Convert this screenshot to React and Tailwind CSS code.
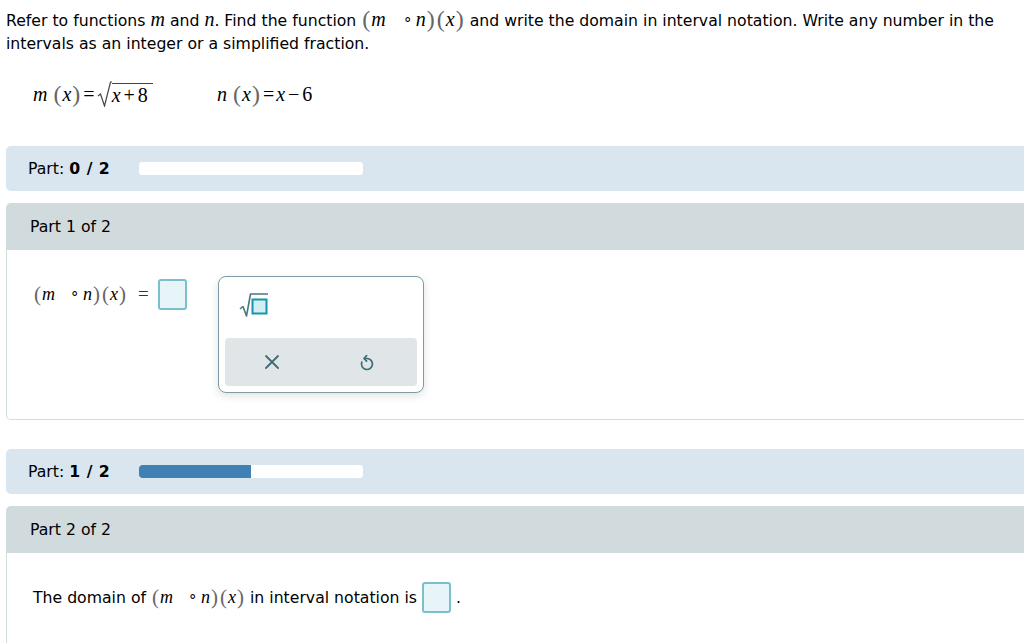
import React from 'react';

const serif = { fontFamily: '"Liberation Serif", "Times New Roman", serif' };

function Paren({ children, big }) {
  return (
    <span className={`text-[#666] leading-none align-[-1px] mx-[1px] ${big ? 'text-[24px]' : 'text-[21px]'}`}>{children}</span>
  );
}

function Compose({ big }) {
  return (
    <span style={serif} className={`whitespace-nowrap ${big ? 'text-[20px]' : 'text-[18px]'}`}>
      <Paren big={big}>(</Paren>
      <i>m</i>
      <span className={`mr-[4px] text-[15px] align-[2px] ${big ? 'ml-[17px]' : 'ml-[15px]'}`}>∘</span>
      <i>n</i>
      <Paren big={big}>)</Paren>
      <Paren big={big}>(</Paren>
      <i>x</i>
      <Paren big={big}>)</Paren>
    </span>
  );
}

function AnswerBox() {
  return <span className="inline-block w-[29px] h-[31px] rounded-[3px] border-2 border-[#7bbfcc] bg-[#e7f4f8] align-middle" />;
}

function SqrtIcon() {
  return (
    <svg width="30" height="28" viewBox="0 0 30 28">
      <path d="M1 18 L4 15.5 L7.5 25 L11.5 3 H29" fill="none" stroke="#4b7782" strokeWidth="1.6" strokeLinejoin="round" />
      <rect x="13.5" y="8.5" width="14" height="14" fill="#d3eef3" stroke="#1596ae" strokeWidth="2" />
    </svg>
  );
}

function XIcon() {
  return (
    <svg width="16" height="16" viewBox="0 0 16 16">
      <path d="M2 2 L14 14 M14 2 L2 14" stroke="#3e6c78" strokeWidth="1.8" strokeLinecap="round" />
    </svg>
  );
}

function UndoIcon() {
  return (
    <svg width="18" height="18" viewBox="0 0 18 18">
      <path d="M3.8 9.1 A5.5 5.5 0 1 0 9 5.5 H6.5" fill="none" stroke="#3e6c78" strokeWidth="1.7" strokeLinecap="round" />
      <path d="M8.6 2.6 L6 5.5 L8.6 8.2" fill="none" stroke="#3e6c78" strokeWidth="1.7" strokeLinecap="round" strokeLinejoin="round" />
    </svg>
  );
}

function PartBar({ done }) {
  return (
    <div className="ml-[6px] w-[1030px] h-[45px] rounded-l-[5px] bg-[#d9e6ef] flex items-center pl-[22px]">
      <span className="w-[111px] whitespace-nowrap">
        Part: <b className="tracking-[0.5px]">{done} / 2</b>
      </span>
      <div className="w-[224px] h-[13px] rounded-[3px] bg-white overflow-hidden">
        {done > 0 && <div className="h-full bg-[#4180b4] rounded-l-[3px]" style={{ width: `${(done / 2) * 100}%` }} />}
      </div>
    </div>
  );
}

function PartHeader({ label }) {
  return (
    <div className="h-[47px] rounded-tl-[5px] bg-[#d1dadd] flex items-center pl-[24px]">{label}</div>
  );
}

export default function App() {
  return (
    <div
      className="w-[1024px] h-[643px] overflow-hidden bg-white text-[15.7px] text-black"
      style={{ fontFamily: '"DejaVu Sans", Verdana, sans-serif' }}
    >
      <p className="pl-[6px] pt-[7px] leading-[23px] pr-[8px]">
        Refer to functions <i style={serif} className="text-[20px]">m</i> and <i style={serif} className="text-[20px]">n</i>. Find the function <Compose big /> and write the domain in interval notation. Write any number in the intervals as an integer or a simplified fraction.
      </p>

      <div style={serif} className="mt-[24px] pl-[33px] h-[30px] flex items-center text-[20px]">
        <span className="w-[184px] whitespace-nowrap flex items-center">
          <i>m</i>&nbsp;<Paren big>(</Paren><i>x</i><Paren big>)</Paren>
          <span className="mx-[2px]">=</span>
          <span className="inline-flex items-end">
            <svg width="15" height="26" viewBox="0 0 15 26">
              <path d="M1 15 L3.5 13 L7.5 25 L13.5 1 H15" fill="none" stroke="#444" strokeWidth="1.2" />
            </svg>
            <span className="border-t-[1.2px] border-[#444] leading-[23px] pr-[5px]"><i>x</i><span className="mx-[3px]">+</span>8</span>
          </span>
        </span>
        <span className="whitespace-nowrap flex items-center">
          <i>n</i>&nbsp;<Paren big>(</Paren><i>x</i><Paren big>)</Paren>
          <span className="mx-[2px]">=</span><i>x</i><span className="mx-[3px]">−</span>6
        </span>
      </div>

      <div className="mt-[37px]">
        <PartBar done={0} />
      </div>

      <div className="mt-[12px] ml-[6px] w-[1030px]">
        <PartHeader label="Part 1 of 2" />
        <div className="h-[170px] border-l border-b border-[#d3dde1] rounded-bl-[5px] pl-[26px] pt-[26px] flex items-start">
          <div className="w-[154px] flex items-center justify-between mt-[3px]">
            <span className="flex items-center gap-[11px]">
              <Compose />
              <span style={serif} className="text-[19px] text-[#333]">=</span>
            </span>
            <AnswerBox />
          </div>
          <div className="ml-[31px] w-[206px] h-[117px] rounded-[8px] border border-[#7d9ba6] bg-white shadow-[0_3px_8px_rgba(0,0,0,0.12)] flex flex-col p-[6px]">
            <div className="h-[55px] pl-[14px] pt-[8px]">
              <SqrtIcon />
            </div>
            <div className="flex-1 rounded-[4px] bg-[#e0e6e8] flex items-center">
              <div className="w-1/2 flex justify-center pr-[2px]"><XIcon /></div>
              <div className="w-1/2 flex justify-center pr-[4px]"><UndoIcon /></div>
            </div>
          </div>
        </div>
      </div>

      <div className="mt-[29px]">
        <PartBar done={1} />
      </div>

      <div className="mt-[12px] ml-[6px] w-[1030px]">
        <PartHeader label="Part 2 of 2" />
        <div className="h-[120px] border-l border-[#d3dde1] pl-[26px] pt-[29px]">
          <div className="flex items-center">
            <span>The domain of&nbsp;</span>
            <Compose />
            <span>&nbsp;in interval notation is&nbsp;</span>
            <AnswerBox />
            <span>&nbsp;.</span>
          </div>
        </div>
      </div>
    </div>
  );
}
